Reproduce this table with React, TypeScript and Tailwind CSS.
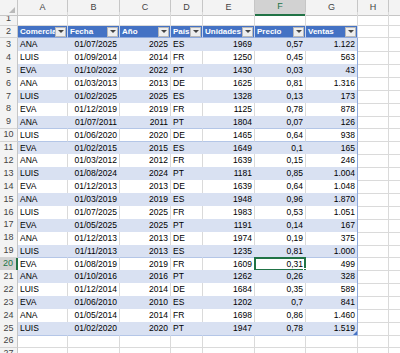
import React from "react";

const cols = "grid grid-cols-[18px_50px_52px_51px_32px_52px_51px_52px_31px_52px]";
const letters = ["A", "B", "C", "D", "E", "F", "G", "H", ""];
const heads = ["Comercial", "Fecha", "Año", "País", "Unidades", "Precio", "Ventas"];

const data: string[][] = [
  ["ANA", "01/07/2025", "2025", "ES", "1969", "0,57", "1.122"],
  ["LUIS", "01/09/2014", "2014", "FR", "1250", "0,45", "563"],
  ["EVA", "01/10/2022", "2022", "PT", "1430", "0,03", "43"],
  ["ANA", "01/03/2013", "2013", "DE", "1625", "0,81", "1.316"],
  ["LUIS", "01/02/2025", "2025", "ES", "1328", "0,13", "173"],
  ["EVA", "01/12/2019", "2019", "FR", "1125", "0,78", "878"],
  ["ANA", "01/07/2011", "2011", "PT", "1804", "0,07", "126"],
  ["LUIS", "01/06/2020", "2020", "DE", "1465", "0,64", "938"],
  ["EVA", "01/02/2015", "2015", "ES", "1649", "0,1", "165"],
  ["ANA", "01/03/2012", "2012", "FR", "1639", "0,15", "246"],
  ["LUIS", "01/08/2024", "2024", "PT", "1181", "0,85", "1.004"],
  ["EVA", "01/12/2013", "2013", "DE", "1639", "0,64", "1.048"],
  ["ANA", "01/03/2019", "2019", "ES", "1948", "0,96", "1.870"],
  ["LUIS", "01/07/2025", "2025", "FR", "1983", "0,53", "1.051"],
  ["EVA", "01/05/2025", "2025", "PT", "1191", "0,14", "167"],
  ["ANA", "01/12/2013", "2013", "DE", "1974", "0,19", "375"],
  ["LUIS", "01/11/2013", "2013", "ES", "1235", "0,81", "1.000"],
  ["EVA", "01/08/2019", "2019", "FR", "1609", "0,31", "499"],
  ["ANA", "01/10/2016", "2016", "PT", "1262", "0,26", "328"],
  ["LUIS", "01/12/2014", "2014", "DE", "1684", "0,35", "589"],
  ["EVA", "01/06/2010", "2010", "ES", "1202", "0,7", "841"],
  ["ANA", "01/05/2014", "2014", "FR", "1698", "0,86", "1.460"],
  ["LUIS", "01/02/2020", "2020", "PT", "1947", "0,78", "1.519"],
];

// columns A and D hold text, the rest are numbers
const leftAligned = [true, false, false, true, false, false, false];

function RowHead({ n }: { n: number }) {
  const sel = n === 20;
  return (
    <div
      className={
        "flex items-center justify-center border-b border-[#d4d4d4] text-[9px] overflow-hidden " +
        (sel
          ? "bg-[#d2d2d2] text-[#217346] border-r-2 border-r-[#217346]"
          : "bg-[#f3f3f3] text-[#444] border-r border-r-[#c6c6c6]")
      }
    >
      {n}
    </div>
  );
}

function Blank() {
  return <div className="border-r border-b border-[#dadada]" />;
}

export default function App() {
  return (
    <div className="w-[400px] h-[353px] overflow-hidden bg-white font-['Liberation_Sans',Arial,sans-serif] text-black">
      {/* column letters */}
      <div className={cols + " h-[12px]"}>
        <div className="relative bg-[#f3f3f3] border-r border-b border-[#c6c6c6]">
          <div className="absolute right-[2px] bottom-[2px] w-0 h-0 border-l-[6px] border-l-transparent border-b-[6px] border-b-[#b9b9b9]" />
        </div>
        {letters.map((l, i) => (
          <div
            key={i}
            className={
              "flex items-center justify-center text-[9px] border-r border-[#c6c6c6] " +
              (l === "F"
                ? "bg-[#d2d2d2] text-[#217346] border-b-2 border-b-[#217346]"
                : "bg-[#f3f3f3] text-[#444] border-b border-b-[#c6c6c6]")
            }
          >
            {l}
          </div>
        ))}
      </div>

      {/* row 1 */}
      <div className={cols + " h-[13.5px]"}>
        <RowHead n={1} />
        {letters.map((_, i) => (
          <Blank key={i} />
        ))}
      </div>

      {/* row 2: table header */}
      <div className={cols + " h-[12.9px]"}>
        <RowHead n={2} />
        {heads.map((h) => (
          <div
            key={h}
            className="relative bg-[#4472c4] border-r border-r-[#c9d5ee] border-b border-b-[#8ea9db] overflow-hidden"
          >
            <span className="absolute left-[2px] top-0 leading-[12px] text-[8px] font-bold text-white whitespace-nowrap">
              {h}
            </span>
            <div className="absolute right-[1px] top-[1px] w-[11px] h-[10px] bg-[#eeeeee] border border-[#b8b8b8] flex items-center justify-center">
              <div className="w-0 h-0 border-l-[3px] border-r-[3px] border-t-[3px] border-l-transparent border-r-transparent border-t-[#444]" />
            </div>
          </div>
        ))}
        <Blank />
        <Blank />
      </div>

      {/* data rows */}
      {data.map((r, i) => {
        const n = i + 3;
        const band = i % 2 === 0;
        return (
          <div key={n} className={cols + " h-[12.9px]"}>
            <RowHead n={n} />
            {r.map((v, j) => {
              const sel = n === 20 && j === 5;
              const last = j === 6;
              return (
                <div
                  key={j}
                  className={
                    "relative flex items-center px-[2px] text-[8.5px] whitespace-nowrap border-b border-b-[#b4c6e7] " +
                    (leftAligned[j] ? "justify-start " : "justify-end ") +
                    (band ? "bg-[#d9e1f2] " : "bg-white ") +
                    (last
                      ? "border-r border-r-[#8ea9db]"
                      : band
                      ? "border-r border-r-[#d9e1f2]"
                      : "border-r border-r-[#dadada]")
                  }
                >
                  {v}
                  {sel && (
                    <div className="absolute -left-[1px] -top-[1px] -right-[1px] -bottom-[1px] border-2 border-[#217346]">
                      <div className="absolute -right-[3px] -bottom-[3px] w-[4px] h-[4px] bg-[#217346] border border-white" />
                    </div>
                  )}
                  {n === 25 && last && (
                    <div className="absolute right-0 bottom-0 w-0 h-0 border-l-[4px] border-l-transparent border-b-[4px] border-b-[#4472c4]" />
                  )}
                </div>
              );
            })}
            <Blank />
            <Blank />
          </div>
        );
      })}

      {/* rows 26-27 */}
      {[26, 27].map((n) => (
        <div key={n} className={cols + " h-[12.9px]"}>
          <RowHead n={n} />
          {letters.map((_, i) => (
            <Blank key={i} />
          ))}
        </div>
      ))}
    </div>
  );
}
